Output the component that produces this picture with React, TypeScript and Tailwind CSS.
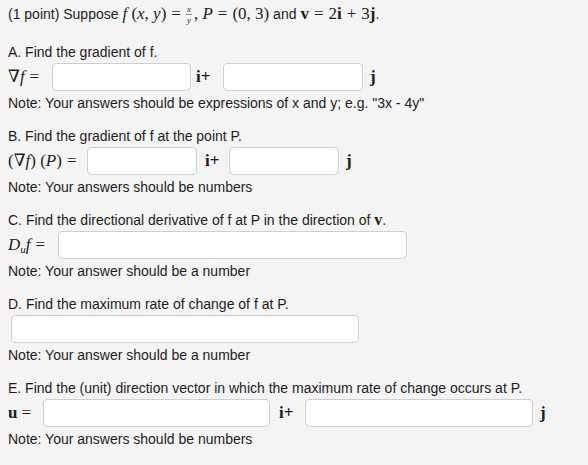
import React from 'react';

const serif = "font-['Liberation_Serif','DejaVu_Serif',serif] text-[17px]";

const Eq = ({ c = '=' }: { c?: string }) => <span className="mx-[5px]">{c}</span>;

const Box = ({ w }: { w: string }) => (
  <div className={`h-7 shrink-0 rounded-[4px] border border-[#cfcfcf] bg-white ${w}`} />
);

const Section = ({
  title,
  note,
  children,
  first,
}: {
  title: React.ReactNode;
  note: string;
  children: React.ReactNode;
  first?: boolean;
}) => (
  <div className={first ? 'mt-[18px]' : 'mt-[13px]'}>
    <div className="h-5 leading-5">{title}</div>
    <div className="mt-px flex h-7 items-center">{children}</div>
    <div className="mt-[2px] h-5 leading-5">{note}</div>
  </div>
);

const App = () => {
  return (
    <div className="min-h-screen bg-[#f4f4f4] pl-2 pt-1 font-['Liberation_Sans',Arial,sans-serif] text-[14px] text-[#1c1c1c]">
      {/* header line */}
      <div className="flex h-5 items-center whitespace-pre">
        <span>(1 point) Suppose </span>
        <span className={serif}>
          <i>f</i> (<i>x</i>, <i>y</i>)<Eq />
        </span>
        <span className="mr-[2px] inline-flex flex-col items-center font-['Liberation_Serif',serif] text-[9px] leading-[8px]">
          <i className="pb-px">x</i>
          <i className="border-t border-[#888] px-px pt-px">y</i>
        </span>
        <span className={serif}>
          , <i>P</i><Eq />(0, 3)
        </span>
        <span> and </span>
        <span className={serif}>
          <b>v</b><Eq />2<b>i</b><Eq c="+" />3<b>j</b>
        </span>
        <span>.</span>
      </div>

      <Section first title="A. Find the gradient of f." note={'Note: Your answers should be expressions of x and y; e.g. "3x - 4y"'}>
        <span className={`${serif} w-[44px] shrink-0 whitespace-pre`}>
          ∇<i>f</i><span className="ml-[5px]">=</span>
        </span>
        <Box w="w-[139px]" />
        <span className={`${serif} w-[32px] shrink-0 pl-[5px] font-bold`}>i+</span>
        <Box w="w-[140px]" />
        <span className={`${serif} pl-[7px] font-bold`}>j</span>
      </Section>

      <Section title="B. Find the gradient of f at the point P." note="Note: Your answers should be numbers">
        <span className={`${serif} w-[79px] shrink-0 whitespace-pre`}>
          (∇<i>f</i>) (<i>P</i>)<span className="ml-[5px]">=</span>
        </span>
        <Box w="w-[110px]" />
        <span className={`${serif} w-[32px] shrink-0 pl-[8px] font-bold`}>i+</span>
        <Box w="w-[110px]" />
        <span className={`${serif} pl-[7px] font-bold`}>j</span>
      </Section>

      <Section
        title={
          <>
            C. Find the directional derivative of f at P in the direction of{' '}
            <b className="font-['Liberation_Serif',serif] text-[16px]">v</b>.
          </>
        }
        note="Note: Your answer should be a number"
      >
        <span className={`${serif} w-[50px] shrink-0 whitespace-pre`}>
          <i>D</i>
          <i className="relative top-[3px] text-[11px]">u</i>
          <i>f</i>
          <span className="ml-[5px]">=</span>
        </span>
        <Box w="w-[349px]" />
      </Section>

      <Section title="D. Find the maximum rate of change of f at P." note="Note: Your answer should be a number">
        <div className="w-[3px] shrink-0" />
        <Box w="w-[348px]" />
      </Section>

      <Section
        title="E. Find the (unit) direction vector in which the maximum rate of change occurs at P."
        note="Note: Your answers should be numbers"
      >
        <span className={`${serif} w-[35px] shrink-0 whitespace-pre`}>
          <b>u</b>
          <span className="ml-[4px]">=</span>
        </span>
        <Box w="w-[227px]" />
        <span className={`${serif} w-[35px] shrink-0 pl-[9px] font-bold`}>i+</span>
        <Box w="w-[228px]" />
        <span className={`${serif} pl-[7px] font-bold`}>j</span>
      </Section>
    </div>
  );
};

export default App;
